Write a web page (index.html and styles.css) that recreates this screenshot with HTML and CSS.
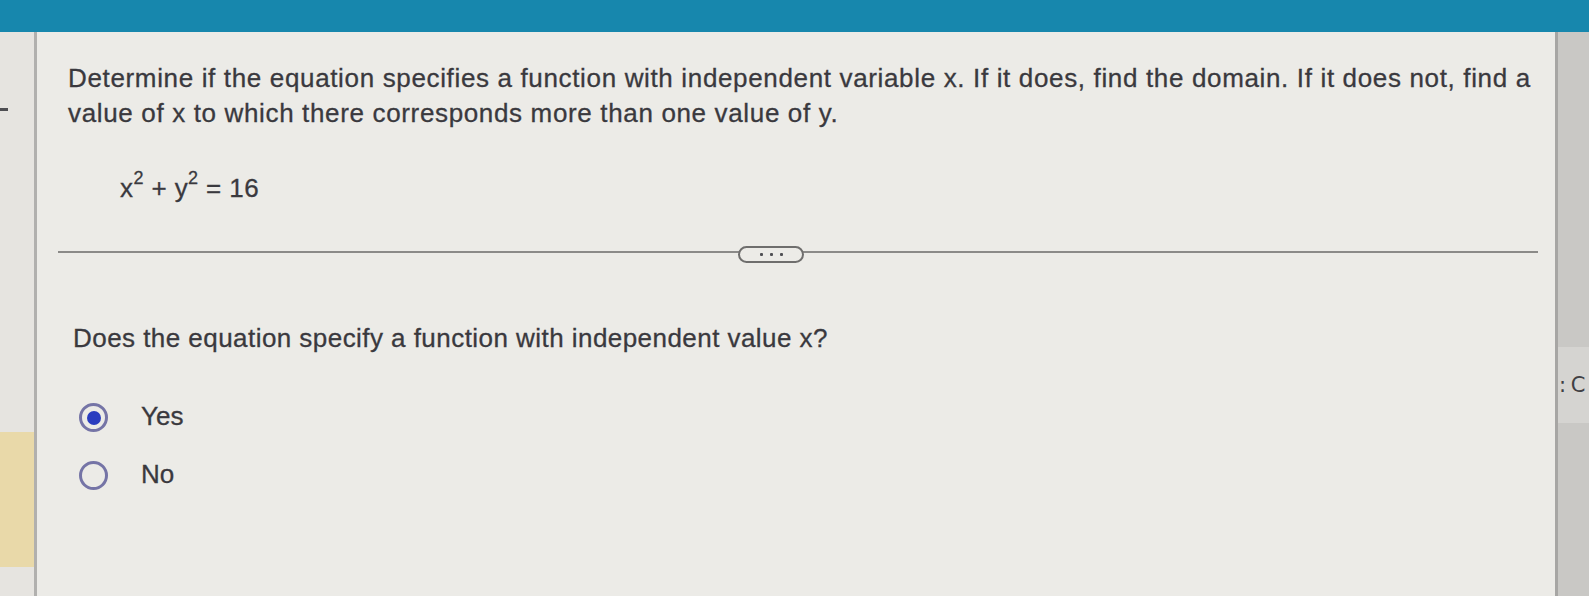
FILE: index.html
```html
<!DOCTYPE html>
<html>
<head>
<meta charset="utf-8">
<link rel="stylesheet" href="styles.css">
</head>
<body>
<div class="topbar"></div>
<div class="layout">
  <aside class="left">
    <div class="dash"></div>
    <div class="note"></div>
  </aside>
  <main class="main">
    <p class="prompt">Determine if the equation specifies a function with independent variable x. If it does, find the domain. If it does not, find a value of x to which there corresponds more than one value of y.</p>
    <div class="equation">x<sup>2</sup> + y<sup>2</sup> = 16</div>
    <div class="divider">
      <span class="more"><i></i><i></i><i></i></span>
    </div>
    <p class="question">Does the equation specify a function with independent value x?</p>
    <div class="options">
      <label class="option"><span class="radio checked"></span><span>Yes</span></label>
      <label class="option"><span class="radio"></span><span>No</span></label>
    </div>
  </main>
  <aside class="right">
    <div class="peek">: C</div>
  </aside>
</div>
</body>
</html>
```
FILE: styles.css
```css
html, body {
  margin: 0;
  padding: 0;
}
body {
  width: 1589px;
  height: 596px;
  overflow: hidden;
  background: #e5e3df;
  font-family: "Liberation Sans", Arial, sans-serif;
  color: #3a393e;
}
.topbar {
  height: 32px;
  background: #1787ad;
}
.layout {
  display: flex;
  height: 564px;
}
.left {
  width: 34px;
  background: #e6e4e0;
  border-right: 3px solid #b1b0ae;
  display: flex;
  flex-direction: column;
}
.dash {
  width: 8px;
  height: 3px;
  background: #4e4e52;
  margin-top: 76px;
}
.note {
  margin-top: 321px;
  height: 135px;
  width: 34px;
  background: #e9d9a9;
}
.main {
  flex: 1;
  background: #ecebe7;
  padding: 29px 17px 0 31px;
  box-sizing: border-box;
  -webkit-text-stroke: 0.3px #3a393e;
}
.prompt {
  margin: 0;
  font-size: 26px;
  line-height: 35px;
  letter-spacing: 0.65px;
  max-width: 1470px;
}
.equation {
  margin: 42px 0 0 52px;
  font-size: 26px;
  line-height: 30px;
  letter-spacing: 0.4px;
}
.equation sup {
  font-size: 18px;
  vertical-align: 13px;
  line-height: 0;
  margin-left: 0;
}
.divider {
  margin: 48px 0 0 -10px;
  height: 2px;
  background: #8b8a88;
  position: relative;
}
.more {
  position: absolute;
  left: 680px;
  top: -5px;
  width: 62px;
  height: 13px;
  border: 2px solid #6f6e6d;
  border-radius: 9px;
  background: #ecebe7;
  display: flex;
  align-items: center;
  justify-content: center;
  gap: 7px;
}
.more i {
  width: 3px;
  height: 3px;
  background: #505055;
  border-radius: 1px;
}
.question {
  margin: 70px 0 0 5px;
  font-size: 26px;
  line-height: 30px;
  letter-spacing: 0.45px;
}
.options {
  margin: 47px 0 0 11px;
  display: flex;
  flex-direction: column;
  gap: 26px;
}
.option {
  display: flex;
  align-items: center;
  gap: 33px;
  font-size: 26px;
  line-height: 30px;
}
.radio {
  width: 23px;
  height: 23px;
  border: 3px solid #7574a6;
  border-radius: 50%;
  display: flex;
  align-items: center;
  justify-content: center;
  margin-top: 3px;
}
.radio.checked::after {
  content: "";
  width: 14px;
  height: 14px;
  border-radius: 50%;
  background: #2a3dbf;
}
.right {
  width: 34px;
  background: #c9c8c5;
  border-left: 3px solid #a7a6a4;
  box-sizing: border-box;
  overflow: hidden;
}
.peek {
  margin-top: 315px;
  height: 76px;
  background: #d5d4d1;
  font-size: 21px;
  line-height: 76px;
  letter-spacing: -1px;
  color: #404044;
  white-space: nowrap;
  padding-left: 1px;
  font-family: "DejaVu Sans", sans-serif;
}
```
